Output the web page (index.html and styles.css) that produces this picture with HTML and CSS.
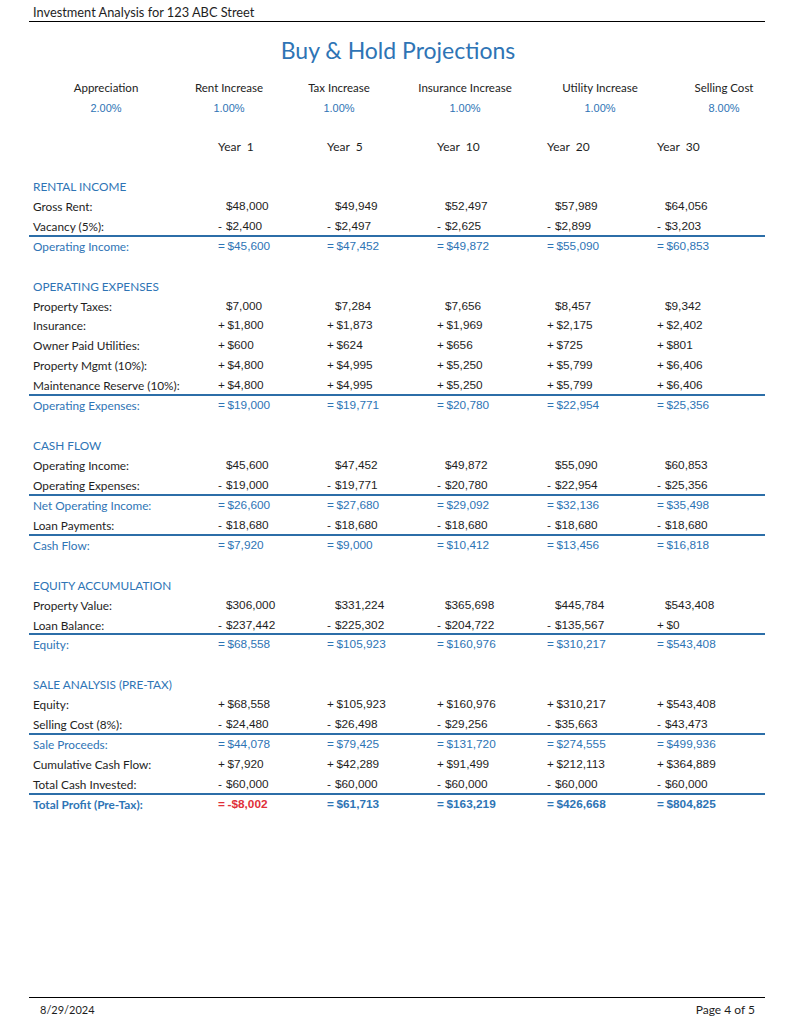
FILE: index.html
```html
<!DOCTYPE html>
<html>
<head>
<meta charset="utf-8">
<link rel="stylesheet" href="styles.css">
</head>
<body>
<div class="page">
  <div class="top">Investment Analysis for 123 ABC Street</div>
  <h1 class="title">Buy &amp; Hold Projections</h1>

  <div class="assump">
    <div class="a-col"><div class="a-lbl">Appreciation</div><div class="a-val">2.00%</div></div>
    <div class="a-col"><div class="a-lbl">Rent Increase</div><div class="a-val">1.00%</div></div>
    <div class="a-col"><div class="a-lbl">Tax Increase</div><div class="a-val">1.00%</div></div>
    <div class="a-col"><div class="a-lbl">Insurance Increase</div><div class="a-val">1.00%</div></div>
    <div class="a-col"><div class="a-lbl">Utility Increase</div><div class="a-val">1.00%</div></div>
    <div class="a-col"><div class="a-lbl">Selling Cost</div><div class="a-val">8.00%</div></div>
  </div>

  <div class="row years">
    <div></div><div>Year&nbsp; 1</div><div>Year&nbsp; 5</div><div>Year&nbsp; 10</div><div>Year&nbsp; 20</div><div>Year&nbsp; 30</div>
  </div>

  <div class="table">
    <div class="row blank"></div>

    <div class="row sec"><div class="lbl">RENTAL INCOME</div></div>
    <div class="row"><div class="lbl">Gross Rent:</div><div class="v"><i class="s n"></i>$48,000</div><div class="v"><i class="s n"></i>$49,949</div><div class="v"><i class="s n"></i>$52,497</div><div class="v"><i class="s n"></i>$57,989</div><div class="v"><i class="s n"></i>$64,056</div></div>
    <div class="row line"><div class="lbl">Vacancy (5%):</div><div class="v"><i class="s m">-</i>$2,400</div><div class="v"><i class="s m">-</i>$2,497</div><div class="v"><i class="s m">-</i>$2,625</div><div class="v"><i class="s m">-</i>$2,899</div><div class="v"><i class="s m">-</i>$3,203</div></div>
    <div class="row tot"><div class="lbl">Operating Income:</div><div class="v"><i class="s">=</i>$45,600</div><div class="v"><i class="s">=</i>$47,452</div><div class="v"><i class="s">=</i>$49,872</div><div class="v"><i class="s">=</i>$55,090</div><div class="v"><i class="s">=</i>$60,853</div></div>
    <div class="row blank"></div>

    <div class="row sec"><div class="lbl">OPERATING EXPENSES</div></div>
    <div class="row"><div class="lbl">Property Taxes:</div><div class="v"><i class="s n"></i>$7,000</div><div class="v"><i class="s n"></i>$7,284</div><div class="v"><i class="s n"></i>$7,656</div><div class="v"><i class="s n"></i>$8,457</div><div class="v"><i class="s n"></i>$9,342</div></div>
    <div class="row"><div class="lbl">Insurance:</div><div class="v"><i class="s">+</i>$1,800</div><div class="v"><i class="s">+</i>$1,873</div><div class="v"><i class="s">+</i>$1,969</div><div class="v"><i class="s">+</i>$2,175</div><div class="v"><i class="s">+</i>$2,402</div></div>
    <div class="row"><div class="lbl">Owner Paid Utilities:</div><div class="v"><i class="s">+</i>$600</div><div class="v"><i class="s">+</i>$624</div><div class="v"><i class="s">+</i>$656</div><div class="v"><i class="s">+</i>$725</div><div class="v"><i class="s">+</i>$801</div></div>
    <div class="row"><div class="lbl">Property Mgmt (10%):</div><div class="v"><i class="s">+</i>$4,800</div><div class="v"><i class="s">+</i>$4,995</div><div class="v"><i class="s">+</i>$5,250</div><div class="v"><i class="s">+</i>$5,799</div><div class="v"><i class="s">+</i>$6,406</div></div>
    <div class="row line"><div class="lbl">Maintenance Reserve (10%):</div><div class="v"><i class="s">+</i>$4,800</div><div class="v"><i class="s">+</i>$4,995</div><div class="v"><i class="s">+</i>$5,250</div><div class="v"><i class="s">+</i>$5,799</div><div class="v"><i class="s">+</i>$6,406</div></div>
    <div class="row tot"><div class="lbl">Operating Expenses:</div><div class="v"><i class="s">=</i>$19,000</div><div class="v"><i class="s">=</i>$19,771</div><div class="v"><i class="s">=</i>$20,780</div><div class="v"><i class="s">=</i>$22,954</div><div class="v"><i class="s">=</i>$25,356</div></div>
    <div class="row blank"></div>

    <div class="row sec"><div class="lbl">CASH FLOW</div></div>
    <div class="row"><div class="lbl">Operating Income:</div><div class="v"><i class="s n"></i>$45,600</div><div class="v"><i class="s n"></i>$47,452</div><div class="v"><i class="s n"></i>$49,872</div><div class="v"><i class="s n"></i>$55,090</div><div class="v"><i class="s n"></i>$60,853</div></div>
    <div class="row line"><div class="lbl">Operating Expenses:</div><div class="v"><i class="s m">-</i>$19,000</div><div class="v"><i class="s m">-</i>$19,771</div><div class="v"><i class="s m">-</i>$20,780</div><div class="v"><i class="s m">-</i>$22,954</div><div class="v"><i class="s m">-</i>$25,356</div></div>
    <div class="row tot"><div class="lbl">Net Operating Income:</div><div class="v"><i class="s">=</i>$26,600</div><div class="v"><i class="s">=</i>$27,680</div><div class="v"><i class="s">=</i>$29,092</div><div class="v"><i class="s">=</i>$32,136</div><div class="v"><i class="s">=</i>$35,498</div></div>
    <div class="row line"><div class="lbl">Loan Payments:</div><div class="v"><i class="s m">-</i>$18,680</div><div class="v"><i class="s m">-</i>$18,680</div><div class="v"><i class="s m">-</i>$18,680</div><div class="v"><i class="s m">-</i>$18,680</div><div class="v"><i class="s m">-</i>$18,680</div></div>
    <div class="row tot"><div class="lbl">Cash Flow:</div><div class="v"><i class="s">=</i>$7,920</div><div class="v"><i class="s">=</i>$9,000</div><div class="v"><i class="s">=</i>$10,412</div><div class="v"><i class="s">=</i>$13,456</div><div class="v"><i class="s">=</i>$16,818</div></div>
    <div class="row blank"></div>

    <div class="row sec"><div class="lbl">EQUITY ACCUMULATION</div></div>
    <div class="row"><div class="lbl">Property Value:</div><div class="v"><i class="s n"></i>$306,000</div><div class="v"><i class="s n"></i>$331,224</div><div class="v"><i class="s n"></i>$365,698</div><div class="v"><i class="s n"></i>$445,784</div><div class="v"><i class="s n"></i>$543,408</div></div>
    <div class="row line"><div class="lbl">Loan Balance:</div><div class="v"><i class="s m">-</i>$237,442</div><div class="v"><i class="s m">-</i>$225,302</div><div class="v"><i class="s m">-</i>$204,722</div><div class="v"><i class="s m">-</i>$135,567</div><div class="v"><i class="s">+</i>$0</div></div>
    <div class="row tot"><div class="lbl">Equity:</div><div class="v"><i class="s">=</i>$68,558</div><div class="v"><i class="s">=</i>$105,923</div><div class="v"><i class="s">=</i>$160,976</div><div class="v"><i class="s">=</i>$310,217</div><div class="v"><i class="s">=</i>$543,408</div></div>
    <div class="row blank"></div>

    <div class="row sec"><div class="lbl">SALE ANALYSIS (PRE-TAX)</div></div>
    <div class="row"><div class="lbl">Equity:</div><div class="v"><i class="s">+</i>$68,558</div><div class="v"><i class="s">+</i>$105,923</div><div class="v"><i class="s">+</i>$160,976</div><div class="v"><i class="s">+</i>$310,217</div><div class="v"><i class="s">+</i>$543,408</div></div>
    <div class="row line"><div class="lbl">Selling Cost (8%):</div><div class="v"><i class="s m">-</i>$24,480</div><div class="v"><i class="s m">-</i>$26,498</div><div class="v"><i class="s m">-</i>$29,256</div><div class="v"><i class="s m">-</i>$35,663</div><div class="v"><i class="s m">-</i>$43,473</div></div>
    <div class="row tot"><div class="lbl">Sale Proceeds:</div><div class="v"><i class="s">=</i>$44,078</div><div class="v"><i class="s">=</i>$79,425</div><div class="v"><i class="s">=</i>$131,720</div><div class="v"><i class="s">=</i>$274,555</div><div class="v"><i class="s">=</i>$499,936</div></div>
    <div class="row"><div class="lbl">Cumulative Cash Flow:</div><div class="v"><i class="s">+</i>$7,920</div><div class="v"><i class="s">+</i>$42,289</div><div class="v"><i class="s">+</i>$91,499</div><div class="v"><i class="s">+</i>$212,113</div><div class="v"><i class="s">+</i>$364,889</div></div>
    <div class="row line"><div class="lbl">Total Cash Invested:</div><div class="v"><i class="s m">-</i>$60,000</div><div class="v"><i class="s m">-</i>$60,000</div><div class="v"><i class="s m">-</i>$60,000</div><div class="v"><i class="s m">-</i>$60,000</div><div class="v"><i class="s m">-</i>$60,000</div></div>
    <div class="row tot bold"><div class="lbl">Total Profit (Pre-Tax):</div><div class="v neg"><i class="s">=</i>-$8,002</div><div class="v"><i class="s">=</i>$61,713</div><div class="v"><i class="s">=</i>$163,219</div><div class="v"><i class="s">=</i>$426,668</div><div class="v"><i class="s">=</i>$804,825</div></div>
  </div>

  <div class="footer">
    <span class="date">8/29/2024</span>
    <span>Page 4 of 5</span>
  </div>
</div>
</body>
</html>
```
FILE: styles.css
```css
* { box-sizing: border-box; }
html, body { margin: 0; padding: 0; background: #fff; }
body {
  font-family: Lato, "Open Sans", sans-serif;
  color: #1e1e1e;
  font-size: 11.8px;
}
.page {
  width: 794px;
  min-height: 1021px;
  display: flex;
  flex-direction: column;
}
.top {
  margin: 0 29px;
  padding: 4px 0 0 4px;
  height: 22px;
  line-height: 16px;
  font-size: 12.8px;
  border-bottom: 1px solid #000;
}
.title {
  margin: 13px 0 0;
  text-align: center;
  font-weight: 400;
  font-size: 23px;
  line-height: 30px;
  color: #2e74b5;
  padding-left: 2px;
}
.assump {
  margin: 13px 0 0 44px;
  display: grid;
  grid-template-columns: 124px 122px 98px 154px 116px 132px;
  font-size: 11.5px;
}
.a-col { text-align: center; }
.a-lbl { line-height: 20px; color: #222; }
.a-val {
  line-height: 20px;
  color: #2e74b5;
  font-family: "Liberation Sans", Arial, sans-serif;
  font-size: 11px;
}
.row {
  display: grid;
  grid-template-columns: 189px 109px 110px 110px 110px 108px;
  height: 19.94px;
  line-height: 19px;
  margin: 0 29px;
}
.years { margin-top: 19px; font-size: 12px; }
.lbl { padding-left: 4px; white-space: nowrap; }
.v {
  font-family: "Liberation Sans", Arial, sans-serif;
  font-size: 11.8px;
  white-space: nowrap;
}
.s {
  display: inline-block;
  width: 9.5px;
  font-style: normal;
}
.s.m { width: 8px; }
.s.n { width: 8px; }
.sec .lbl { color: #2e74b5; }
.line { border-bottom: 2px solid #2c6ea8; }
.tot { color: #2e74b5; }
.bold { font-weight: 700; }
.neg { color: #e0303a; }
.footer {
  margin: auto 29px 0;
  border-top: 1px solid #000;
  padding: 3px 10px 2px 11px;
  line-height: 18px;
  height: 24px;
  display: flex;
  justify-content: space-between;
  font-size: 12px;
}
.date { font-size: 11px; }
```
